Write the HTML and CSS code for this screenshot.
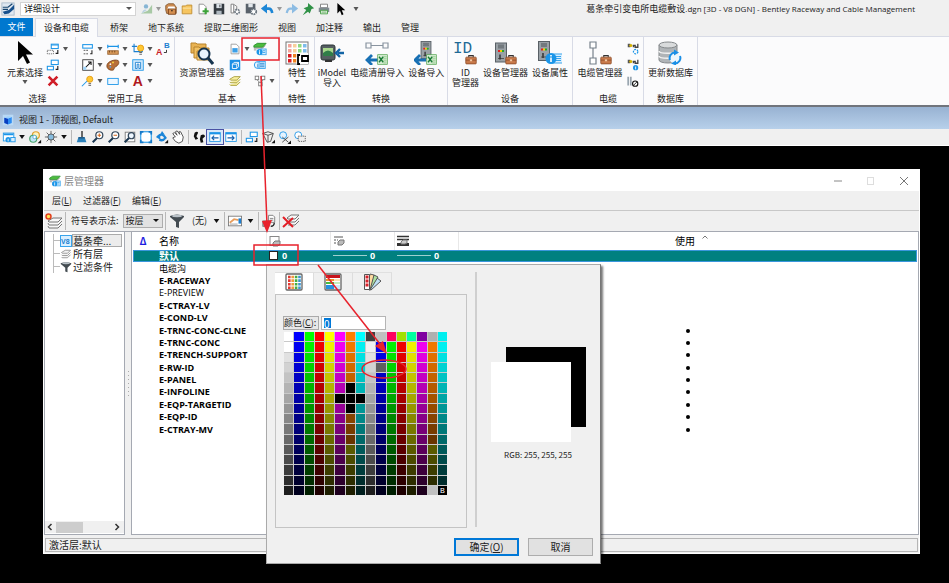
FILE: index.html
```html
<!DOCTYPE html>
<html lang="zh-CN">
<head>
<meta charset="utf-8">
<title>Bentley Raceway and Cable Management</title>
<link rel="stylesheet" href="styles.css">
</head>
<body>
<svg class="defs" aria-hidden="true">
  <symbol id="case" viewBox="0 0 16 16"><path d="M5 6V3.5h6V6" fill="none" stroke="#333" stroke-width="1.4"/><rect x="1" y="5.5" width="14" height="9" rx="1" fill="#c8794a" stroke="#8a4a26"/><path d="M1 9.5h14" stroke="#8a4a26"/><rect x="6.5" y="8.5" width="3" height="2.5" fill="#f3c9a5"/></symbol>
  <symbol id="excel" viewBox="0 0 16 16"><rect x="1" y="1" width="14" height="14" fill="#d5ecd2" stroke="#4ea24a"/><path d="M9 4h5M9 7h5M9 10h5M9 13h5" stroke="#7cbf75"/><path d="M3 4l6 8M9 4l-6 8" stroke="#187b35" stroke-width="2"/></symbol>
  <symbol id="server" viewBox="0 0 12 20"><rect x=".5" y=".5" width="11" height="19" fill="#9aa1a6" stroke="#596066"/><path d="M3 3h6M3 5h6M3 16h6" stroke="#555"/><rect x="3" y="2" width="6" height="4" fill="#72797e"/><rect x="3" y="7.5" width="2" height="2" fill="#e02020"/><rect x="5" y="7.5" width="2" height="2" fill="#f5d000"/><rect x="7" y="7.5" width="2" height="2" fill="#24a52c"/><path d="M5 12v5" stroke="#333" stroke-width="1.5"/></symbol>
  <symbol id="info" viewBox="0 0 18 12"><rect x="7" y="1.5" width="10.5" height="9" fill="#d9efff" stroke="#38a4ec"/><path d="M11 4h5M11 6h5M11 8h5" stroke="#38a4ec"/><circle cx="6" cy="6" r="5.5" fill="#1b95e8"/><path d="M6 5v4.500M6 2.500v1.500" stroke="#fff" stroke-width="1.6"/></symbol>
  <symbol id="windows" viewBox="0 0 16 16"><rect x="6" y="2.500" width="8" height="5" fill="#fff" stroke="#1b95e8" stroke-width="1.2"/><path d="M6 3.500h8" stroke="#1b95e8"/><rect x="1.500" y="9.500" width="7" height="4" fill="none" stroke="#666" stroke-dasharray="1.500 1"/><path d="M13.500 9v4h-2.500" fill="none" stroke="#222" stroke-width="1.3"/></symbol>
  <symbol id="windows2" viewBox="0 0 16 16"><rect x="6" y="2.500" width="8" height="5" fill="#fff" stroke="#1b95e8" stroke-width="1.200"/><rect x="1.500" y="9.500" width="7" height="4" fill="#fff" stroke="#1b95e8" stroke-width="1.200"/><path d="M13.500 9v4h-2.500" fill="none" stroke="#222" stroke-width="1.300"/></symbol>
  <symbol id="x" viewBox="0 0 16 16"><path d="M3 3l10 10M13 3L3 13" stroke="#d01e28" stroke-width="3"/></symbol>
  <symbol id="cursor" viewBox="0 0 16 24"><path d="M1 0v20l5-5 4 8 3-1.500-4-8h7z" fill="#000"/></symbol>
  <symbol id="linestyle" viewBox="0 0 16 16"><rect x="2" y="3" width="11" height="4" fill="#fff" stroke="#1b95e8" stroke-width="1.200"/><path d="M3 9.500h6M3 13.500h6" stroke="#444" stroke-dasharray="2 1"/><path d="M12.500 9.500v4h-2" fill="none" stroke="#222" stroke-width="1.200"/></symbol>
  <symbol id="ruler" viewBox="0 0 16 16"><path d="M2 5h12M2 3v4M14 3v4" stroke="#1b95e8" stroke-width="1.300"/><rect x="2" y="10" width="12" height="4" fill="#d99a5a" stroke="#9a6533"/><path d="M4 10v2M7 10v2M10 10v2" stroke="#704018"/></symbol>
  <symbol id="bulbplus" viewBox="0 0 16 16"><path d="M3.500 2v9h10M1 5h6" fill="none" stroke="#1b7fd0" stroke-width="1.200"/><circle cx="11" cy="7" r="3.500" fill="#ffc832" stroke="#e39a12"/><path d="M9.500 12h3M9.500 14h3" stroke="#555"/></symbol>
  <symbol id="scale" viewBox="0 0 16 16"><rect x="2" y="2" width="12" height="12" fill="#fff" stroke="#333"/><path d="M4 12l7-7M8 4.500h3.500V8" fill="none" stroke="#111" stroke-width="1.200"/><rect x="2.500" y="10" width="3.500" height="3.500" fill="#9fd3f9"/></symbol>
  <symbol id="brushes" viewBox="0 0 16 16"><path d="M14 3C10 1 1 4 1 9c0 5 7 6 8 4s0-2 2-3 5-4 3-7z" fill="#b8703a" stroke="#7c451e"/><circle cx="5" cy="7" r="1" fill="#fff"/><circle cx="8" cy="5" r="1" fill="#ffe040"/><circle cx="5" cy="10" r="1" fill="#5aa6e8"/></symbol>
  <symbol id="maze" viewBox="0 0 16 16"><rect x="2" y="2" width="12" height="12" fill="#d4ebfc" stroke="#1b95e8"/><path d="M5 12V5h6v7H9V7H7v5z" fill="#fff" stroke="#1b7fd0"/></symbol>
  <symbol id="bulbline" viewBox="0 0 16 16"><path d="M1 14l6-6" stroke="#1b95e8" stroke-width="1.200"/><circle cx="10" cy="6" r="3.500" fill="#ffc832" stroke="#e39a12"/><path d="M8.500 11h3M8.500 13h3" stroke="#555"/></symbol>
  <symbol id="rect" viewBox="0 0 16 16"><rect x="2" y="5" width="12" height="7" fill="#eef7ff" stroke="#1b95e8"/></symbol>
  <symbol id="layers" viewBox="0 0 16 16"><path d="M2 6l5-3h7l-4 4H3zM2 9l1 1h7l4-4M2 12l1 1h7l4-4" fill="#f4f4f4" stroke="#808080"/></symbol>
  <symbol id="layersy" viewBox="0 0 16 16"><path d="M2 6l5-3h7l-4 4H3zM2 9l1 1h7l4-4M2 12l1 1h7l4-4" fill="#f6ee9d" stroke="#a59a35"/></symbol>
  <symbol id="layerinfo" viewBox="0 0 16 16"><path d="M1 4l4-2.500h10L11 6H1z" fill="#4cbb3e" stroke="#25902a"/><path d="M1 7h10l3-3M1 9h3" stroke="#888" fill="none"/><rect x="9" y="8" width="6" height="6.500" fill="#d9efff" stroke="#38a4ec"/><path d="M11 10h3M11 12h3" stroke="#38a4ec"/><circle cx="7.500" cy="11.500" r="3.500" fill="#1b95e8"/><path d="M7.500 10.500V14M7.500 9v1" stroke="#fff"/></symbol>
  <symbol id="docblue" viewBox="0 0 16 16"><path d="M3.500 2.500h6l3 3v8h-9z" fill="#fff" stroke="#999"/><rect x="5" y="7" width="6" height="5" fill="#3a9fe8"/></symbol>
  <symbol id="cube" viewBox="0 0 16 16"><rect x="2" y="2" width="12" height="12" fill="#1b8fe6"/><path d="M5 7h5v5H5zM5 7l2-2h5l-2 2M12 5v5l-2 2" fill="none" stroke="#fff"/></symbol>
  <symbol id="infosmall" viewBox="0 0 16 16"><circle cx="5.500" cy="8" r="4" fill="#e6f4ff" stroke="#1b95e8"/><rect x="7" y="4" width="7" height="8" fill="#d9efff" stroke="#38a4ec"/><path d="M8 6h5M8 8h5M8 10h5" stroke="#1b7fd0"/><path d="M5.500 7v4M5.500 5v1" stroke="#1b7fd0"/></symbol>
  <symbol id="boxes" viewBox="0 0 16 16"><g fill="#fff" stroke="#777"><rect x="2.500" y="2.500" width="4" height="4"/><rect x="9.500" y="2.500" width="4" height="4"/><rect x="6.500" y="9.500" width="4" height="4"/></g><path d="M4.500 6.500L7 9M11.500 6.500L10 9" stroke="#777"/></symbol>
  <symbol id="explorer" viewBox="0 0 24 24"><path d="M1 2h5l1 1h9v9H1z" fill="#e8b252" stroke="#b8832c"/><path d="M4 6h5l1 1h9v10H4z" fill="#f1c163" stroke="#b8832c"/><path d="M7 10h4l1 1h7v8H7z" fill="#f8d486" stroke="#b8832c"/><circle cx="14" cy="13" r="5.500" fill="#e9f5fd" stroke="#16344f" stroke-width="2"/><path d="M18 17l5 6" stroke="#16344f" stroke-width="3"/></symbol>
  <symbol id="props" viewBox="0 0 24 24"><rect x="1" y="1" width="22" height="22" fill="#fff" stroke="#777"/><g><path d="M3 3h3.500v3.500H3zM3 8h3.500v3.500H3z" fill="#f3a59c"/><path d="M3 13h3.500v3.500H3zM3 18h3.500v3.500H3z" fill="#d91d23"/><path d="M8 3h3.500v3.500H8zM8 8h3.500v3.500H8z" fill="#f9cf9c"/><path d="M8 13h3.500v3.500H8zM8 18h3.500v3.500H8z" fill="#ef8420"/><path d="M13 3h3.500v3.500H13zM13 8h3.500v3.500H13z" fill="#8fd982"/><path d="M18 3h3.500v3.500H18zM18 8h3.500v3.500H18z" fill="#7ebcec"/></g><path d="M11.500 12H23v11H11.500z" fill="#fff"/><path d="M15 14h-2v9h2M17 15h6v5h-6z" fill="none" stroke="#000" stroke-width="1.800"/></symbol>
  <symbol id="imodel" viewBox="0 0 24 24"><rect x="1" y="4" width="14" height="15" rx="2" fill="#555e61" stroke="#2d3538"/><path d="M3 7h10v7H3z" fill="#a9d88d"/><path d="M3 12q5-5 10 0v3H3z" fill="#307d48"/><path d="M5 19h7v2H5z" fill="#333"/><path d="M24 12h-6M20 8l-4 4 4 4" fill="none" stroke="#1264a5" stroke-width="2.400"/></symbol>
  <symbol id="cableimport" viewBox="0 0 24 24"><path d="M1 2h5v5H1zM18 2h5v5h-5zM6 4.500h12" fill="none" stroke="#8994a0" stroke-width="1.200"/><path d="M13 19H4M7 14l-5 5 5 5" fill="none" stroke="#1870b4" stroke-width="2.800"/><use href="#excel" x="12" y="13" width="11" height="11"/></symbol>
  <symbol id="devimport" viewBox="0 0 24 24"><use href="#server" x="6" y="0" width="12" height="18"/><path d="M12 19H3M6 14l-5 5 5 5" fill="none" stroke="#1870b4" stroke-width="2.800"/><use href="#excel" x="12" y="13" width="11" height="11"/></symbol>
  <symbol id="devmgr" viewBox="0 0 24 24"><use href="#server" x="2" y="1" width="12" height="21"/><use href="#case" x="12" y="12" width="12" height="12"/></symbol>
  <symbol id="devprops" viewBox="0 0 24 24"><use href="#server" x="0" y="0" width="12" height="20"/><use href="#info" x="7" y="11" width="18" height="13"/></symbol>
  <symbol id="cablemgr" viewBox="0 0 24 24"><path d="M2 1h6v6H2zM2 17h6v6H2zM5 7v10" fill="#fff" stroke="#77818b" stroke-width="1.200"/><use href="#case" x="12" y="12" width="12" height="12"/></symbol>
  <symbol id="db" viewBox="0 0 24 24"><path d="M1 4v15c0 4 18 4 18 0V4" fill="#b0b4b7" stroke="#85898c"/><ellipse cx="10" cy="4" rx="9" ry="3" fill="#d9dbdc" stroke="#85898c"/><path d="M1 10c0 3 18 3 18 0M1 15c0 3 18 3 18 0" fill="none" stroke="#f3f3f3" stroke-width="1.500"/><circle cx="17" cy="17" r="5.500" fill="#eef6fc"/><path d="M12 19a5.500 5.500 0 0 1 5-7.500M22 15a5.500 5.500 0 0 1-5 7.500" fill="none" stroke="#1b8fe6" stroke-width="2"/><path d="M16 8.500l5 3-5 3zM18 19.500l-5 3 5 2z" fill="#1b8fe6"/></symbol>
  <symbol id="reader" viewBox="0 0 16 16"><rect x="2" y="2" width="3" height="4" fill="#555"/><circle cx="5.500" cy="4" r="1.800" fill="#d6b400"/><path d="M8.500 6V4h2v2h3V2" fill="none" stroke="#444" stroke-width="1.500"/><circle cx="11" cy="11" r="2.500" fill="none" stroke="#1b95e8" stroke-dasharray="2 1" stroke-width="1.400"/></symbol>
  <symbol id="reader2" viewBox="0 0 16 16"><rect x="2" y="2" width="3" height="4" fill="#555"/><circle cx="5.500" cy="4" r="1.800" fill="#d6b400"/><path d="M8.500 6V4h2v2h3V2" fill="none" stroke="#444" stroke-width="1.500"/><circle cx="11" cy="11" r="3" fill="#1b95e8"/><path d="M11 10v3M11 9v.5" stroke="#fff"/></symbol>
  <symbol id="bars" viewBox="0 0 16 16"><path d="M2.500 3v10M5.500 3v10" stroke="#9aa6b0" stroke-width="2"/><circle cx="10.500" cy="11" r="3" fill="#fff" stroke="#111" stroke-width="1.300"/><path d="M8.500 13l4-4" stroke="#111"/></symbol>
  <symbol id="logo" viewBox="0 0 16 16"><rect x="1" y="1" width="14" height="14" fill="#dfe8f1" stroke="#aabccb"/><path d="M2 11l7-2 6-6v5l-6 5-5 1z" fill="#17508c"/><path d="M2 6h6l5-4M2 8.500h6" stroke="#17446e" stroke-width="1.400" fill="none"/></symbol>
  <symbol id="scene" viewBox="0 0 16 16"><path d="M2 13l8-3 5-7v10z" fill="#a8c9a5"/><circle cx="8" cy="5" r="2.500" fill="#87b5d4"/><path d="M3 13q2-6 6-4" fill="#b9d1e1"/></symbol>
  <symbol id="folder" viewBox="0 0 16 16"><path d="M2.500 4.500h4l1-1h6v10h-11z" fill="#f6c55f" stroke="#bf8c2e"/><path d="M3 7h10" stroke="#fde7ac"/></symbol>
  <symbol id="casefolder" viewBox="0 0 16 16"><path d="M2 9V4l3-2h6l3 4v7H3z" fill="#cd8b4f" stroke="#865a32"/><path d="M5 5h7l1 3H4z" fill="#fff"/><rect x="5" y="8" width="8" height="6" fill="#d59050" stroke="#7c451e"/><path d="M8 10h2" stroke="#111"/></symbol>
  <symbol id="docplus" viewBox="0 0 16 16"><path d="M3.500 2.500h5l3 3v8h-8z" fill="#fff" stroke="#888"/><path d="M11 7v7M7.500 10.500h7" stroke="#3ca338" stroke-width="2.400"/></symbol>
  <symbol id="save" viewBox="0 0 16 16"><path d="M2 2h12v12H2z" fill="#333a40"/><path d="M5 2h6v5H5z" fill="#dbe2e8"/><path d="M5 10h6v4H5z" fill="#aeb8c0"/><path d="M9 3v3" stroke="#333"/></symbol>
  <symbol id="gear" viewBox="0 0 16 16"><path d="M3.500 2.500h3v10h-3zM7 3l3 2v4" fill="#fff" stroke="#777"/><circle cx="10.500" cy="11" r="2.500" fill="#fff" stroke="#6d7780" stroke-width="2" stroke-dasharray="2 .8"/></symbol>
  <symbol id="savegear" viewBox="0 0 16 16"><path d="M2 2h11v11H2z" fill="#59616a"/><path d="M5 2h5v4H5z" fill="#e2e7eb"/><circle cx="11" cy="11" r="3" fill="#fff" stroke="#6d7780" stroke-width="2" stroke-dasharray="2 .8"/></symbol>
  <symbol id="undo" viewBox="0 0 16 16"><path d="M4 7.500h6q3 0 4 5" fill="none" stroke="#1c86d6" stroke-width="3"/><path d="M8 2L1 7.500 8 13z" fill="#1c86d6"/></symbol>
  <symbol id="redo" viewBox="0 0 16 16"><path d="M12 7.500H6q-3 0-4 5" fill="none" stroke="#8dbce3" stroke-width="2.600"/><path d="M8 2l7 5.500L8 13z" fill="#8dbce3"/></symbol>
  <symbol id="pin" viewBox="0 0 16 16"><path d="M8 1l7 6-3 1-2 5-2-2-6 4 4-6-3-2 5-2z" fill="#2f9146"/></symbol>
  <symbol id="printer" viewBox="0 0 16 16"><path d="M4 2.500h8v4H4z" fill="#fff" stroke="#777"/><rect x="2" y="6.500" width="12" height="5" fill="#7f8a90"/><path d="M4 9.500h8v4H4z" fill="#fff" stroke="#3f9c3b"/><path d="M5 11.500h6" stroke="#3f9c3b"/></symbol>
  <symbol id="smallcursor" viewBox="0 0 16 16"><path d="M5 1v12l3-3 2 5 2-1-2-4.500h4z" fill="#000"/></symbol>
  <symbol id="viewcube" viewBox="0 0 16 16"><rect x="1" y="1" width="14" height="14" fill="#b9d9f5"/><path d="M3 5l5 1v8l-5-2z" fill="#083fc0"/><path d="M8 6l5-2v8l-5 2z" fill="#2d8cf2"/><path d="M3 5l5-2 5 1-5 2z" fill="#9bd0ff"/></symbol>
  <symbol id="viewattr" viewBox="0 0 16 16"><rect x="1.500" y="3.500" width="12" height="9" fill="#fff" stroke="#1b95e8"/><path d="M2 5h11" stroke="#1b95e8" stroke-width="2"/><circle cx="7" cy="11" r="3" fill="#1b95e8"/><path d="M7 10v3" stroke="#fff"/><rect x="10" y="8.500" width="5" height="5" fill="#d9efff" stroke="#1b95e8"/></symbol>
  <symbol id="style" viewBox="0 0 16 16"><circle cx="9" cy="6" r="4" fill="#fff4bd" stroke="#e0a030" stroke-width="1.400"/><circle cx="6" cy="10" r="4" fill="#c3e6f5" stroke="#4aa66e" stroke-width="1.400"/><circle cx="7.500" cy="8" r="2" fill="#fff" stroke="#58a9dc"/><path d="M15 11v4h-4z" fill="#111"/></symbol>
  <symbol id="sun" viewBox="0 0 16 16"><path d="M8 1v14M1 8h14M3 3l10 10M13 3L3 13" stroke="#555"/><circle cx="8" cy="8" r="3.500" fill="#88bddf" stroke="#555"/></symbol>
  <symbol id="brush" viewBox="0 0 16 16"><path d="M8 1v7" stroke="#555" stroke-width="2"/><path d="M4 8h7l2 6H2z" fill="#2c82bc"/><path d="M4 9h7" stroke="#173e60"/></symbol>
  <symbol id="zoomin" viewBox="0 0 16 16"><path d="M7 9l-5 5" stroke="#17344f" stroke-width="2.400"/><circle cx="9.500" cy="6" r="4" fill="#fff" stroke="#33475b" stroke-width="1.400"/><path d="M7.500 6h4M9.500 4v4" stroke="#d56b22" stroke-width="1.200"/></symbol>
  <symbol id="zoomout" viewBox="0 0 16 16"><path d="M7 9l-5 5" stroke="#17344f" stroke-width="2.400"/><circle cx="9.500" cy="6" r="4" fill="#fff" stroke="#33475b" stroke-width="1.400"/><path d="M7.500 6h4" stroke="#d56b22" stroke-width="1.200"/></symbol>
  <symbol id="zoomwin" viewBox="0 0 16 16"><rect x="2.500" y="2.500" width="11" height="11" fill="#fff" stroke="#777"/><path d="M7 9l-5 5" stroke="#17344f" stroke-width="2.400"/><circle cx="9.500" cy="6.500" r="3.500" fill="#eef7ff" stroke="#33475b" stroke-width="1.400"/></symbol>
  <symbol id="fit" viewBox="0 0 16 16"><rect x="2" y="2" width="12" height="12" fill="#fff" stroke="#1b95e8" stroke-width="1.200"/><path d="M2 5V2h3M11 2h3v3M14 11v3h-3M5 14H2v-3" fill="none" stroke="#1478c8" stroke-width="2"/></symbol>
  <symbol id="rotate" viewBox="0 0 16 16"><path d="M3 8q5-6 9 1-3 4-7 2" fill="none" stroke="#1b85d8" stroke-width="2.600"/><path d="M1 8l5-4v7zM8 1l3 4H6z" fill="#1b85d8"/><path d="M15 11v4h-4z" fill="#111"/></symbol>
  <symbol id="hand" viewBox="0 0 16 16"><path d="M5 8L2 4l2-1 3 3-2-4 2-1 3 4-1-3h2l3 6-1 5-4 2-4-2-3-4 2-1z" fill="#fff" stroke="#444"/></symbol>
  <symbol id="foot" viewBox="0 0 16 16"><path d="M3 3q3-2 4 0L5 7l2 3-3 1-2-4zM10 6q4-2 5 1l-3 3 1 4-3 .5-1-4z" fill="#111"/></symbol>
  <symbol id="prev" viewBox="0 0 16 16"><rect x="2" y="3" width="12" height="10" fill="#fff" stroke="#1b95e8"/><path d="M2 4h12" stroke="#1b95e8" stroke-width="2"/><path d="M12 9H5M7 6.500L4.500 9 7 11.500" fill="none" stroke="#125fae" stroke-width="1.300"/></symbol>
  <symbol id="next" viewBox="0 0 16 16"><rect x="2" y="3" width="12" height="10" fill="#fff" stroke="#1b95e8"/><path d="M2 4h12" stroke="#1b95e8" stroke-width="2"/><path d="M4 9h7M9 6.500L11.500 9 9 11.500" fill="none" stroke="#125fae" stroke-width="1.300"/></symbol>
  <symbol id="clip" viewBox="0 0 16 16"><path d="M2 4l6-2 6 2-3 9-4 1zM2 4l6 2 6-2M8 6v8" fill="#eee" stroke="#444"/><path d="M16 11v4h-4z" fill="#111"/></symbol>
  <symbol id="clip2" viewBox="0 0 16 16"><circle cx="7" cy="6" r="4" fill="#e4f3ff" stroke="#1b95e8"/><path d="M6 8l7 6M13 8l-7 6" stroke="#444"/><path d="M16 12v4h-4z" fill="#111"/></symbol>
  <symbol id="clip3" viewBox="0 0 16 16"><circle cx="6" cy="6" r="4" fill="#fff" stroke="#1b95e8"/><path d="M6 7h8v6H6z" fill="#eee" stroke="#555" stroke-dasharray="1.500 1"/></symbol>
  <symbol id="newlayer" viewBox="0 0 18 16"><path d="M3 8l5-3h9l-4 4H4zM3 10l1 2h9l4-4M3 13l1 2h9l4-4" fill="#f7f7f7" stroke="#777"/><circle cx="3.500" cy="3.500" r="2.500" fill="#ffe450" stroke="#e2401c" stroke-width="1.500"/></symbol>
  <symbol id="funnel" viewBox="0 0 16 16"><path d="M1 3q7-3 14 0v1l-5 5v6l-3-1V9L1 4z" fill="#444c52"/><ellipse cx="8" cy="3" rx="5" ry="1.200" fill="#b8c0c6"/></symbol>
  <symbol id="picture" viewBox="0 0 16 16"><rect x=".5" y="2.500" width="15" height="11" fill="#fff" stroke="#777"/><path d="M2 10l5-4 5 1" stroke="#e79d5c" stroke-width="2" fill="none"/><path d="M12 5h3v6h-3z" fill="#1b7fd0"/><path d="M2 11.500h9" stroke="#999"/></symbol>
  <symbol id="exchange" viewBox="0 0 16 16"><path d="M7.500 1.500h5l2 2v6h-7z" fill="#fff" stroke="#777"/><path d="M9 5h4M9 7h4" stroke="#777"/><rect x="1" y="8" width="7" height="6" fill="#aeb6bc" stroke="#666"/><path d="M14 10q0 4-4 4" fill="none" stroke="#222" stroke-width="1.500"/></symbol>
  <symbol id="dellayer" viewBox="0 0 18 16"><path d="M5 5l4-3h8l-4 4H6zM5 8l1 1h7l4-4M6 12h7l4-4" fill="#f7f7f7" stroke="#777"/><path d="M1 4l10 10M11 5L1 14" stroke="#e21e26" stroke-width="2"/></symbol>
  <symbol id="hcolor" viewBox="0 0 12 12"><rect x="1" y="1.500" width="9" height="9" fill="#fff" stroke="#888"/><path d="M4 8l2-2h5v3l-2 2H4z" fill="#bbb" stroke="#777"/></symbol>
  <symbol id="hstyle" viewBox="0 0 12 12"><path d="M1 2h9" stroke="#555"/><path d="M1 5h4M1 8h3" stroke="#555" stroke-dasharray="2 1"/><path d="M5 7l2-2h4v3L9 10H5z" fill="#bbb" stroke="#777"/></symbol>
  <symbol id="hweight" viewBox="0 0 14 12"><path d="M1 1.500h12M1 4.500h12" stroke="#333" stroke-width="1.500"/><path d="M1 9.500h12" stroke="#333" stroke-width="3"/><path d="M5 7l2-2h4v3L9 9H5z" fill="#ccc" stroke="#777"/></symbol>
  <symbol id="ptable" viewBox="0 0 18 18"><rect x="1" y="1" width="16" height="16" rx="1" fill="#fff" stroke="#666" stroke-width="1.300"/><g stroke-width="2.600" stroke-dasharray="2.600 1"><path d="M4.300 2.700v14" stroke="#e43a32"/><path d="M7.700 2.700v14" stroke="#f09a3e"/><path d="M11.100 2.700v14" stroke="#49ad3f"/><path d="M14.500 2.700v14" stroke="#3a94cf"/></g></symbol>
  <symbol id="pspectrum" viewBox="0 0 18 18"><rect x="1" y="1" width="16" height="16" rx="1" fill="#fff"/><path d="M2 2h14v3H2z" fill="#c8141c"/><path d="M2 6h8v2H2z" fill="#f0902a"/><path d="M10 6h6v2h-6z" fill="#fbe0b4"/><path d="M2 9h8v2H2z" fill="#49bb40"/><path d="M10 9h6v2h-6z" fill="#c5edc0"/><path d="M2 12h8v4H2z" fill="#2690e0"/><path d="M10 12h6v4h-6z" fill="#cfe8fa"/><rect x="1" y="1" width="16" height="16" rx="1" fill="none" stroke="#666" stroke-width="1.300"/></symbol>
  <symbol id="pbook" viewBox="0 0 18 18"><g stroke="#555" fill="#fff"><path d="M5 16L14 5l4 3-10 9z" fill="#bfe0f5"/><path d="M5 16L11 2l4 2-8 13z" fill="#ace0a0"/><path d="M4 16L7 1l4 1-4 15z" fill="#ffd9a0"/><path d="M1.500 1.500h5v15h-5z"/></g><path d="M2.500 4h3M2.500 8h3M2.500 12h3" stroke="#d9222b" stroke-width="3"/></symbol>
</svg>

<header class="app">
  <div class="quick">
    <svg class="i"><use href="#logo"/></svg>
    <label class="pick workflow"><select aria-label="工作流"><option>详细设计</option></select></label>
    <button class="b" aria-label="场景"><svg class="i"><use href="#scene"/></svg></button><i class="dd dim"></i>
    <button class="b" aria-label="打开项目"><svg class="i"><use href="#casefolder"/></svg></button>
    <button class="b" aria-label="打开"><svg class="i"><use href="#folder"/></svg></button>
    <button class="b" aria-label="新建"><svg class="i"><use href="#docplus"/></svg></button>
    <button class="b" aria-label="保存"><svg class="i"><use href="#save"/></svg></button>
    <button class="b" aria-label="压缩"><svg class="i"><use href="#gear"/></svg></button>
    <button class="b" aria-label="保存设置"><svg class="i"><use href="#savegear"/></svg></button>
    <button class="b" aria-label="撤销"><svg class="i"><use href="#undo"/></svg></button><i class="dd dim"></i>
    <button class="b" aria-label="重做"><svg class="i"><use href="#redo"/></svg></button>
    <button class="b" aria-label="固定"><svg class="i"><use href="#pin"/></svg></button>
    <button class="b" aria-label="打印"><svg class="i"><use href="#printer"/></svg></button>
    <button class="b" aria-label="选择"><svg class="i"><use href="#smallcursor"/></svg></button>
    <button class="b more" aria-label="更多"><i class="dd"></i></button>
    <h1 class="title">葛条牵引变电所电缆敷设<span class="latin">.dgn [3D - V8 DGN] - Bentley Raceway and Cable Management</span></h1>
  </div>
  <nav class="tabs">
    <button class="file">文件</button><button class="on">设备和电缆</button><button>桥架</button><button>地下系统</button><button>提取二维图形</button><button>视图</button><button>加注释</button><button>输出</button><button>管理</button>
  </nav>
  <div class="ribbon">
    <section class="group g-select">
      <div class="tools">
        <button class="big"><svg class="l"><use href="#cursor"/></svg><span>元素选择</span><i class="dd"></i></button>
        <div class="small one">
          <svg class="i"><use href="#windows"/></svg><i class="dd"></i>
          <svg class="i"><use href="#windows2"/></svg><i></i>
          <svg class="i"><use href="#x"/></svg><i></i>
        </div>
      </div>
      <h2>选择</h2>
    </section>
    <section class="group g-common">
      <div class="tools">
        <div class="small four">
          <svg class="i"><use href="#linestyle"/></svg><i class="dd"></i><svg class="i"><use href="#ruler"/></svg><i class="dd"></i><svg class="i"><use href="#bulbplus"/></svg><i class="dd"></i><svg class="i" viewBox="0 0 16 16"><text x="0" y="15" class="glyph-a">A</text><text x="9" y="7" class="glyph-b">B</text><path d="M9 12h3V9" fill="none" stroke="#222"/></svg>
          <svg class="i"><use href="#scale"/></svg><i class="dd"></i><svg class="i"><use href="#brushes"/></svg><i class="dd"></i><svg class="i"><use href="#maze"/></svg><i class="dd"></i><i></i>
          <svg class="i"><use href="#bulbline"/></svg><i class="dd"></i><svg class="i"><use href="#rect"/></svg><i class="dd"></i><svg class="i" viewBox="0 0 16 16"><text x="2" y="14" class="glyph-big">A</text></svg><i class="dd"></i><i></i>
        </div>
      </div>
      <h2>常用工具</h2>
    </section>
    <section class="group g-basic">
      <div class="tools">
        <button class="big"><svg class="l"><use href="#explorer"/></svg><span>资源管理器</span></button>
        <div class="small two">
          <svg class="i"><use href="#docblue"/></svg><i class="dd"></i><svg class="i"><use href="#layerinfo"/></svg><i></i>
          <svg class="i"><use href="#cube"/></svg><i></i><svg class="i"><use href="#infosmall"/></svg><i></i>
          <svg class="i"><use href="#layersy"/></svg><i></i><svg class="i"><use href="#boxes"/></svg><i class="dd"></i>
        </div>
      </div>
      <h2>基本</h2>
    </section>
    <section class="group g-props">
      <div class="tools"><button class="big"><svg class="l"><use href="#props"/></svg><span>特性</span><i class="dd"></i></button></div>
      <h2>特性</h2>
    </section>
    <section class="group g-convert">
      <div class="tools">
        <button class="big"><svg class="l"><use href="#imodel"/></svg><span>iModel<br>导入</span></button>
        <button class="big"><svg class="l"><use href="#cableimport"/></svg><span>电缆清册导入</span></button>
        <button class="big"><svg class="l"><use href="#devimport"/></svg><span>设备导入</span></button>
      </div>
      <h2>转换</h2>
    </section>
    <section class="group g-device">
      <div class="tools">
        <button class="big"><svg class="l" viewBox="0 0 24 24"><text x="0" y="12" class="glyph-id">ID</text><use href="#case" x="12" y="12" width="12" height="12"/></svg><span>ID<br>管理器</span></button>
        <button class="big"><svg class="l"><use href="#devmgr"/></svg><span>设备管理器</span></button>
        <button class="big"><svg class="l"><use href="#devprops"/></svg><span>设备属性</span></button>
      </div>
      <h2>设备</h2>
    </section>
    <section class="group g-cable">
      <div class="tools">
        <button class="big"><svg class="l"><use href="#cablemgr"/></svg><span>电缆管理器</span></button>
        <div class="small col"><svg class="i"><use href="#reader"/></svg><svg class="i"><use href="#reader2"/></svg><svg class="i"><use href="#bars"/></svg></div>
      </div>
      <h2>电缆</h2>
    </section>
    <section class="group g-db">
      <div class="tools"><button class="big"><svg class="l"><use href="#db"/></svg><span>更新数据库</span></button></div>
      <h2>数据库</h2>
    </section>
  </div>
</header>

<div class="viewtitle"><svg class="vi"><use href="#viewcube"/></svg>视图 1 - 顶视图, Default</div>
<div class="viewbar">
  <svg class="i"><use href="#viewattr"/></svg><i class="dd"></i>
  <svg class="i"><use href="#style"/></svg><svg class="i"><use href="#sun"/></svg><i class="dd"></i><i class="sep"></i>
  <svg class="i"><use href="#brush"/></svg><svg class="i"><use href="#zoomin"/></svg><svg class="i"><use href="#zoomout"/></svg><svg class="i"><use href="#zoomwin"/></svg><svg class="i"><use href="#fit"/></svg><svg class="i"><use href="#rotate"/></svg><svg class="i"><use href="#hand"/></svg><i class="sep"></i>
  <svg class="i"><use href="#foot"/></svg><svg class="i active"><use href="#prev"/></svg><svg class="i"><use href="#next"/></svg><i class="sep"></i>
  <svg class="i"><use href="#windows2"/></svg><svg class="i"><use href="#clip"/></svg><svg class="i"><use href="#clip2"/></svg><svg class="i"><use href="#clip3"/></svg>
</div>

<main class="canvas">
  <section class="window">
    <div class="caption">
      <svg class="ci"><use href="#layerinfo"/></svg><span>层管理器</span>
      <svg class="wc" viewBox="0 0 80 12"><path d="M1 6h8" stroke="#888"/><rect x="34.500" y="2.500" width="6" height="7" fill="none" stroke="#ddd"/><path d="M67 2l8 8M75 2l-8 8" stroke="#777"/></svg>
    </div>
    <nav class="menu"><button>层(<u>L</u>)</button><button>过滤器(<u>F</u>)</button><button>编辑(<u>E</u>)</button></nav>
    <div class="bar">
      <svg class="w"><use href="#newlayer"/></svg><i class="sep"></i>
      <label class="sym" for="sym">符号表示法:</label>
      <span class="pick by"><select id="sym"><option>按层</option></select></span><i class="sep"></i>
      <svg class="f"><use href="#funnel"/></svg>
      <button class="none">(无)</button><i class="dd"></i><i class="sep"></i>
      <svg class="i"><use href="#picture"/></svg><i class="dd wide"></i><i class="sep"></i>
      <svg class="i"><use href="#exchange"/></svg><i class="sep"></i>
      <svg class="w"><use href="#dellayer"/></svg>
    </div>
    <div class="panes">
      <aside class="tree">
        <ul>
          <li class="cur"><svg class="t" viewBox="0 0 12 12"><rect x=".5" y=".5" width="11" height="11" fill="#d9efff" stroke="#38a4ec"/><text x="1" y="9" class="glyph-v">V8</text></svg><span>葛条牵...</span></li>
          <li><svg class="t"><use href="#layers"/></svg><span>所有层</span></li>
          <li><svg class="t"><use href="#funnel"/></svg><span>过滤条件</span></li>
        </ul>
        <div class="hscroll"><svg viewBox="0 0 6 8"><path d="M4.500 1L1.500 4l3 3" fill="none" stroke="#333" stroke-width="1.500"/></svg><i></i><svg viewBox="0 0 6 8"><path d="M1.500 1l3 3-3 3" fill="none" stroke="#333" stroke-width="1.500"/></svg></div>
      </aside>
      <div class="split"></div>
      <div class="list">
        <table>
          <colgroup><col class="c-mark"><col class="c-name"><col class="c-attr"><col class="c-attr"><col class="c-attr"><col class="c-gap"><col></colgroup>
          <thead><tr><th class="mark">Δ</th><th class="name">名称</th><th><svg class="h"><use href="#hcolor"/></svg></th><th><svg class="h"><use href="#hstyle"/></svg></th><th><svg class="h"><use href="#hweight"/></svg></th><th></th><th class="use">使用<svg class="caret" viewBox="0 0 6 4"><path d="M.5 3.500L3 1l2.500 2.500" fill="none" stroke="#777"/></svg></th></tr></thead>
          <tbody>
            <tr class="sel"><td></td><td>默认</td><td><i class="chip"></i>0</td><td><i class="line"></i>0</td><td><i class="line"></i>0</td><td></td><td></td></tr>
            <tr class="plain"><td></td><td>电缆沟</td><td></td><td></td><td></td><td></td><td></td></tr>
            <tr><td></td><td>E-RACEWAY</td><td></td><td></td><td></td><td></td><td></td></tr>
            <tr class="plain"><td></td><td>E-PREVIEW</td><td></td><td></td><td></td><td></td><td></td></tr>
            <tr><td></td><td>E-CTRAY-LV</td><td></td><td></td><td></td><td></td><td></td></tr>
            <tr><td></td><td>E-COND-LV</td><td></td><td></td><td></td><td></td><td></td></tr>
            <tr><td></td><td>E-TRNC-CONC-CLNE</td><td></td><td></td><td></td><td></td><td><i class="dot"></i></td></tr>
            <tr><td></td><td>E-TRNC-CONC</td><td></td><td></td><td></td><td></td><td><i class="dot"></i></td></tr>
            <tr><td></td><td>E-TRENCH-SUPPORT</td><td></td><td></td><td></td><td></td><td><i class="dot"></i></td></tr>
            <tr><td></td><td>E-RW-ID</td><td></td><td></td><td></td><td></td><td><i class="dot"></i></td></tr>
            <tr><td></td><td>E-PANEL</td><td></td><td></td><td></td><td></td><td><i class="dot"></i></td></tr>
            <tr><td></td><td>E-INFOLINE</td><td></td><td></td><td></td><td></td><td><i class="dot"></i></td></tr>
            <tr><td></td><td>E-EQP-TARGETID</td><td></td><td></td><td></td><td></td><td><i class="dot"></i></td></tr>
            <tr><td></td><td>E-EQP-ID</td><td></td><td></td><td></td><td></td><td><i class="dot"></i></td></tr>
            <tr><td></td><td>E-CTRAY-MV</td><td></td><td></td><td></td><td></td><td><i class="dot"></i></td></tr>
          </tbody>
        </table>
      </div>
    </div>
    <div class="status">激活层:默认</div>
  </section>

  <section class="dialog">
    <div class="dmain">
      <div class="book">
        <div class="btabs">
          <button class="on" aria-label="颜色表"><svg><use href="#ptable"/></svg></button>
          <button aria-label="真彩色"><svg><use href="#pspectrum"/></svg></button>
          <button aria-label="颜色簿"><svg><use href="#pbook"/></svg></button>
        </div>
        <div class="page">
          <div class="field"><label for="color">颜色(<u>C</u>):</label><div class="entry"><input id="color" value="0"></div></div>
          <div class="palette" id="colors"></div>
        </div>
      </div>
      <div class="preview">
        <div class="swatch"><i></i></div>
        <p>RGB: 255, 255, 255</p>
      </div>
    </div>
    <div class="actions"><button class="ok">确定(<u>O</u>)</button><button>取消</button></div>
  </section>
</main>

<svg class="notes" width="949" height="583" aria-hidden="true">
  <g fill="none" stroke="#e8222c" stroke-width="1.500">
    <rect x="242" y="38" width="37" height="22"/>
    <path d="M261 76l6 148"/>
    <rect x="254" y="245" width="44" height="20"/>
    <path d="M318 265l62 79"/>
    <ellipse cx="384" cy="369" rx="22" ry="9"/>
  </g>
  <path d="M262 221l10-1-5 13zM375 346l8-5 4 13z" fill="#e8222c"/>
</svg>
<script src="palette.js"></script>
</body>
</html>
```

FILE: styles.css
```css
* { box-sizing: border-box; }
body {
  margin: 0;
  min-height: 100vh;
  display: flex;
  flex-direction: column;
  background: #000;
  color: #222;
  font: 9px/12px "Noto Sans CJK SC", sans-serif;
}
button, select, input { font: inherit; color: inherit; }
button { border: 0; padding: 0; background: none; }
h1, h2, p, ul { margin: 0; padding: 0; font-size: inherit; font-weight: 400; }
ul { list-style: none; }
svg { display: block; flex: none; }
.defs { position: absolute; width: 0; height: 0; }
.glyph-a { font: 700 10px "Liberation Sans", sans-serif; fill: #c81e28; }
.glyph-b { font: 700 9px "Liberation Sans", sans-serif; fill: #1b7fd0; }
.glyph-big { font: 700 16px "Liberation Sans", sans-serif; fill: #b01820; }
.glyph-id { font: 400 16px "Liberation Mono", monospace; fill: #1f6a96; }
.glyph-v { font: 700 7px "Liberation Sans", sans-serif; fill: #1b7fd0; }
.i { width: 16px; height: 14px; }
.dd { flex: none; width: 9px; height: 4px; clip-path: polygon(22% 0, 78% 0, 50% 100%); background: #555; }
.dim { background: #999; }
.sep { flex: none; width: 5px; height: 14px; background: linear-gradient(#b8b8b8, #b8b8b8) center / 1px 100% no-repeat; }

.quick { height: 18px; display: flex; align-items: center; background: #f0f0f0; }
.pick { position: relative; display: block; }
.pick select { appearance: none; display: block; width: 100%; height: 14px; padding: 0 3px; border: 1px solid #d4d4d4; border-radius: 0; background: #fff; line-height: 12px; }
.pick::after { content: ""; position: absolute; right: 4px; top: 5px; border: 3px solid transparent; border-top-color: #555; border-bottom: 0; }
.workflow { width: 116px; margin: 0 2px 0 4px; }
.b { flex: none; width: 16px; height: 16px; }
.more .dd { display: block; margin: 0 auto; }
.title { margin: 0 34px 0 auto; white-space: nowrap; }
.latin { font-family: "Open Sans", sans-serif; font-size: 8px; }

.tabs { height: 19px; display: flex; background: #f0f0f0; border-bottom: 1px solid #d8dbe6; }
.tabs button { padding: 0 10px; height: 19px; }
.tabs .file { width: 33px; padding: 0; margin-right: 2px; background: #0078cf; color: #fff; height: 18px; }
.tabs .on { background: #fbfbfc; border: 1px solid #d8dbe6; border-bottom: 0; padding: 0 8px; margin-right: 2px; }

.ribbon { height: 70px; display: flex; background: #fbfbfc; border-bottom: 2px solid #70747c; }
.group { display: flex; flex-direction: column; border-right: 1px solid #d8dbe6; }
.g-select { width: 76px; }
.g-common { width: 99px; }
.g-basic { width: 105px; }
.g-props { width: 35px; }
.g-convert { width: 133px; }
.g-device { width: 125px; }
.g-cable { width: 71px; }
.g-db { width: 54px; }
.group h2 { text-align: center; line-height: 12px; margin-top: auto; }
.tools { display: flex; justify-content: center; padding-top: 4px; }
.big { display: flex; flex-direction: column; align-items: center; padding: 0 2px; line-height: 10px; white-space: nowrap; }
.big span { margin-top: 3px; }
.big .dd { margin-top: 2px; }
.l { width: 24px; height: 24px; }
.small { display: grid; align-items: center; grid-auto-rows: 16px; }
.one { grid-template-columns: 16px 9px; }
.four { grid-template-columns: 16px 9px 16px 9px 16px 9px 16px; }
.two { grid-template-columns: 16px 9px 16px 9px; }

.viewtitle { height: 22px; display: flex; align-items: center; gap: 5px; padding: 3px 0 0 2px; background: linear-gradient(#98b2d2, #b7d0ea); }
.vi { width: 12px; height: 12px; }
.viewbar { height: 17px; display: flex; align-items: center; padding-left: 1px; background: #f0f0f0; border-bottom: 1px solid #fff; }
.viewbar .dd { width: 10px; background: #111; }
.active { background: #d9e8f8; outline: 1px solid #4a52a4; }

.canvas { position: relative; flex: 1; display: flex; padding: 23px 29px 29px 43px; background: #000; }
.window { flex: 1; display: flex; flex-direction: column; background: #f0f0f0; border: 1px solid #fff; font-size: 10px; }
.caption { height: 21px; display: flex; align-items: center; gap: 3px; padding: 0 6px 0 5px; background: #fff; color: #888; }
.ci { width: 12px; height: 12px; }
.wc { width: 80px; height: 12px; margin-left: auto; }
.menu { height: 20px; display: flex; gap: 11px; padding-left: 8px; border-bottom: 1px solid #c8c8c8; font-size: 9px; }
.bar { height: 21px; display: flex; align-items: center; padding-left: 1px; border-bottom: 1px solid #a5a9b2; font-size: 9px; }
.w { width: 18px; height: 16px; }
.sym { margin: 0 4px 0 3px; }
.by { width: 40px; }
.by select { background: #e2e2e2; border-color: #adadad; padding: 0 2px; }
.by::after { border-top-color: #111; }
.f { width: 16px; height: 16px; margin: 0 7px 0 1px; }
.none { width: 16px; white-space: nowrap; }
.bar .dd { width: 10px; margin: 0 0 0 4px; background: #111; }
.bar .wide { margin: 0 0 0 3px; }
.bar .sep { height: 18px; }
.panes { flex: 1; display: flex; }
.tree { width: 81px; display: flex; flex-direction: column; background: #fff; border: 1px solid #a5a9b2; border-top: 0; padding-top: 2px; }
.tree li { height: 13px; display: flex; align-items: center; margin-left: 8px; border-left: 1px solid #bbb; white-space: nowrap; }
.tree li::before { content: ""; width: 6px; border-top: 1px solid #bbb; }
.tree li span { padding: 0 1px; }
.tree .cur span { flex: 1; margin-right: 2px; background: #ececec; border: 1px solid #aaa; padding: 0; line-height: 11px; }
.t { width: 12px; height: 12px; }
.hscroll { height: 12px; margin: auto 0 1px; display: flex; align-items: center; justify-content: space-between; padding: 0 4px 0 2px; background: #f0f0f0; }
.hscroll svg { width: 6px; height: 8px; }
.hscroll i { width: 27px; height: 11px; margin: 0 28px 0 0; background: #cdcdcd; }
.split { width: 6px; background: repeating-linear-gradient(#aaa 0 1px, transparent 1px 4px) center / 1px 26px no-repeat; }
.list { flex: 1; background: #fff; border: 1px solid #a5a9b2; border-top: 0; padding: 0 1px; }
table { width: 100%; height: 204px; table-layout: fixed; border-collapse: collapse; line-height: 12px; }
td, th { padding: 0; text-align: left; white-space: nowrap; color: #000; }
td { font-family: "Open Sans", "Noto Sans CJK SC", sans-serif; font-size: 9px; font-weight: 700; }
th { height: 18px; font-size: 10px; font-weight: 400; border-right: 1px solid #e8e8e8; }
th:nth-child(1), th:nth-child(6), th:last-child { border-right: 0; }
.c-mark { width: 20px; }
.c-name { width: 113px; }
.c-attr { width: 64px; }
.c-gap { width: 217px; }
.mark { text-align: center; color: #1c1ce0; font-weight: 700; }
td:nth-child(2), .name { padding-left: 6px; }
.plain td { font-weight: 400; }
.sel { background: #008080; outline: 1px solid #3a96dd; outline-offset: -1px; }
.sel td { color: #fff; }
.sel td:nth-child(2) { font-size: 10px; }
.h { width: 14px; height: 12px; margin-left: 1px; }
.caret { display: inline-block; width: 6px; height: 4px; margin: 0 0 6px 7px; }
.chip { display: inline-block; width: 9px; height: 9px; margin: 0 4px 0 3px; background: #fff; border: 1px solid #222; vertical-align: -1px; }
.line { display: inline-block; width: 34px; height: 1px; margin: 0 3px 0 3px; background: #9fd0d0; vertical-align: 3px; }
.dot { display: block; width: 4px; height: 4px; margin-left: 11px; border-radius: 50%; background: #000; }
.status { height: 14px; margin: 3px 1px 1px; padding-left: 3px; border: 1px solid #b5b5b5; line-height: 11px; }

.dialog { position: absolute; left: 266px; top: 118px; width: 335px; background: #f0f0f0; border: 1px solid #aaa; border-right-color: #777; box-shadow: 2px 2px 2px #0008; padding: 7px 7px 7px 8px; font-size: 10px; }
.dmain { display: flex; }
.book { width: 192px; }
.btabs { display: flex; height: 22px; }
.btabs button { width: 39px; display: flex; justify-content: center; border-right: 1px solid #ddd; border-top: 1px solid #e0e0e0; }
.btabs .on { background: #fff; }
.btabs svg { width: 18px; height: 18px; }
.page { height: 234px; border: 1px solid #c4c4c4; padding: 21px 0 0 8px; }
.field { display: flex; height: 14px; gap: 2px; margin-bottom: 2px; margin-left: -1px; }
.field label { width: 36px; border: 1px solid #aaa; font-size: 9px; line-height: 12px; white-space: nowrap; background: #e8e8e8; }
.entry { width: 65px; border: 1px solid #b5b5b5; background: #fff; padding: 1px 2px; display: flex; }
.entry input { width: 7px; height: 10px; border: 0; padding: 0; background: #0078d7; color: #fff; line-height: 10px; }
.palette { width: 163px; height: 163px; display: grid; grid-template: repeat(16, 1fr) / repeat(16, 1fr); gap: 1px; background: #c9c9c9; }
.palette button { min-width: 0; min-height: 0; font: 8px/9px "Liberation Mono", monospace; color: #fff; }
.preview { flex: 1; height: 255px; margin-left: 8px; border-left: 2px solid #cfcfcf; display: flex; flex-direction: column; align-items: center; padding: 75px 0 0 6px; font-size: 8px; }
.swatch { width: 95px; height: 95px; padding: 15px 15px 0 0; background: linear-gradient(#000, #000) right top / 80px 80px no-repeat; }
.swatch i { display: block; width: 80px; height: 80px; background: #fff; }
.preview p { margin-top: 7px; }
.actions { display: flex; justify-content: flex-end; gap: 9px; margin-top: 10px; }
.actions button { width: 65px; height: 18px; background: #e1e1e1; border: 1px solid #adadad; }
.actions .ok { border: 2px solid #0078d7; }
.notes { position: absolute; left: 0; top: 0; pointer-events: none; }
```

FILE: palette.js
```js
const firstRow = ["#fff", "#00f", "#0f0", "#f00", "#ff0", "#f0f", "#ff7f00", "#0ff",
  "#404040", "#c0c0c0", "#ff0060", "#a0e000", "#00ffa0", "#8000a0", "#b0b0b0", "#00efef"];
const hues = [[1, 1, 1], [0, 0, 1], [0, 1, 0], [1, 0, 0], [1, 1, 0], [1, 0, 1], [1, .5, 0], [0, 1, 1]];
const special = {
  "1,0": "#fff", "3,9": "#606060", "5,6": "#000", "6,5": "#000", "6,6": "#000",
  "6,7": "#000", "7,6": "#000", "15,14": "#c0c0c0", "15,15": "#000"
};
const grid = document.getElementById("colors");
for (let row = 0; row < 16; row++) {
  for (let col = 0; col < 16; col++) {
    const level = 240 - 15 * (row - 1);
    let hue = hues[col % 8];
    if (col % 8 === 6 && row > 10) hue = [1, 1, 0];
    const cell = document.createElement("button");
    cell.style.background = row === 0 ? firstRow[col]
      : special[row + "," + col] || `rgb(${hue.map(h => Math.round(h * level)).join(",")})`;
    cell.setAttribute("aria-label", String(row * 16 + col));
    if (row === 15 && col === 15) cell.textContent = "B";
    grid.append(cell);
  }
}
```
